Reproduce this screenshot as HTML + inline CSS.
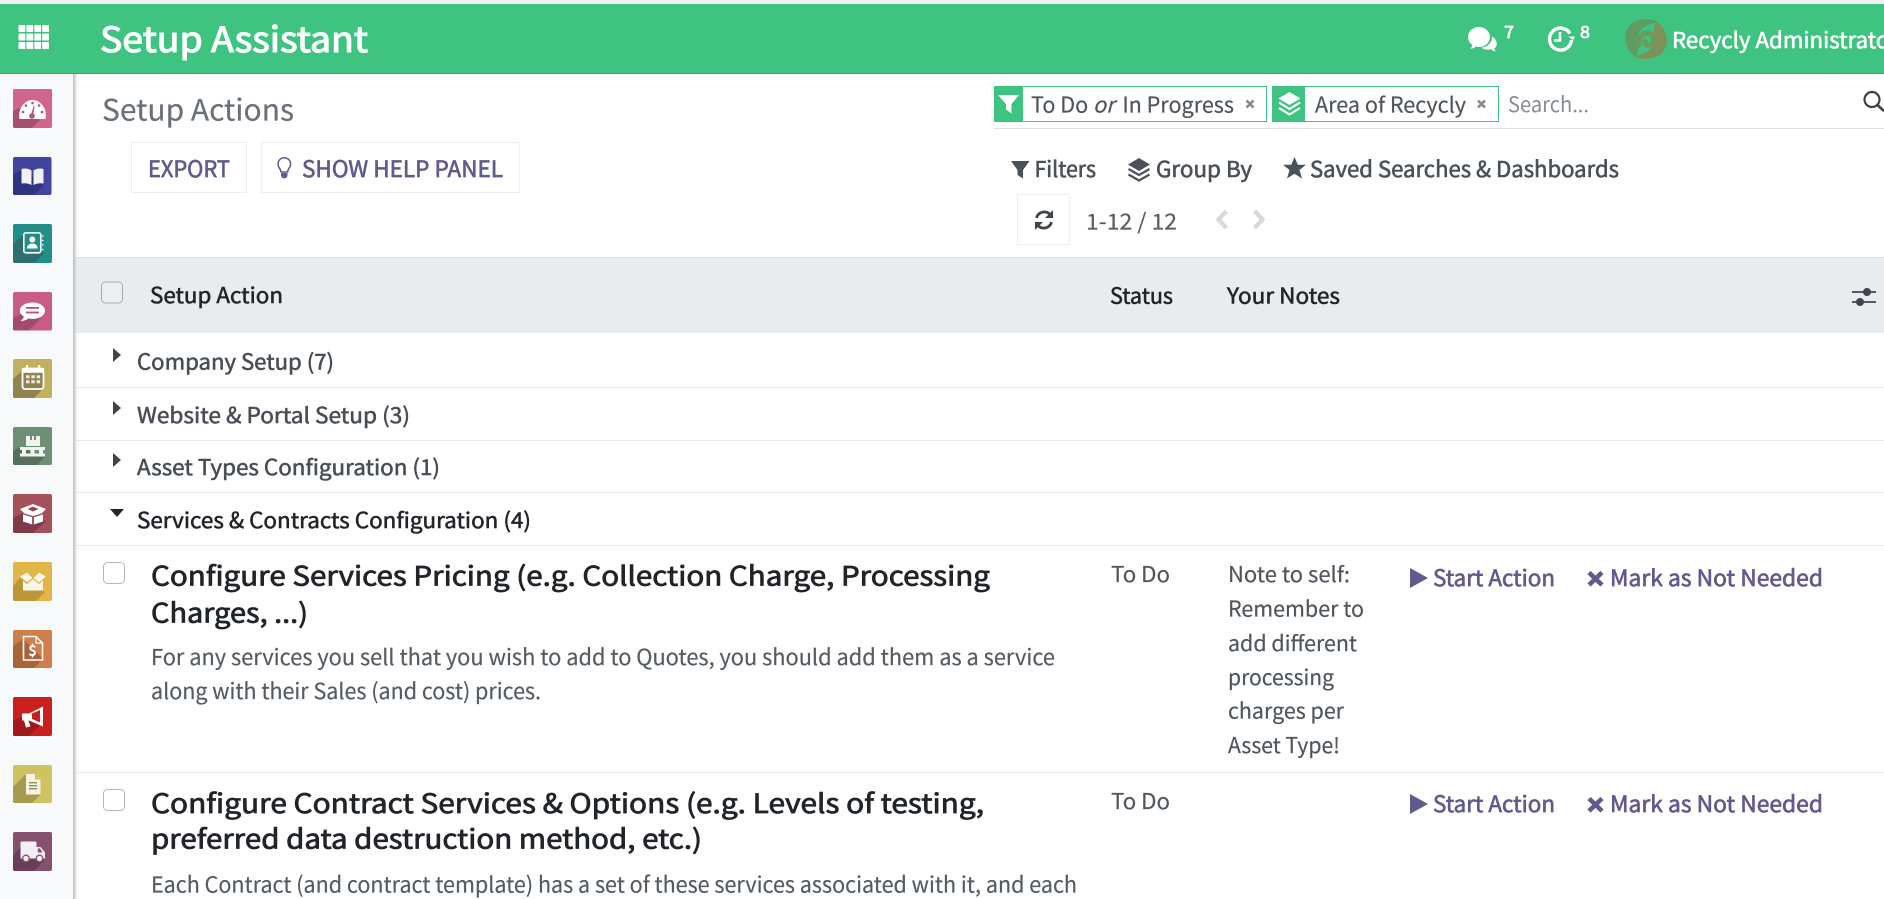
<!DOCTYPE html>
<html lang="en">
<head>
<meta charset="utf-8">
<title>Setup Assistant</title>
<style>
html,body{margin:0;padding:0;width:1884px;height:899px;overflow:hidden;background:#fff}
svg{display:block;filter:blur(.35px)}
text{font-family:"Noto Sans CJK JP","Liberation Sans",sans-serif;white-space:pre}
.w{fill:#fff;stroke:#fff;stroke-width:.5}
.h{fill:#212529;stroke:#212529;stroke-width:.75;font-size:26.5px}
.d{fill:#555c63;stroke:#555c63;stroke-width:.2;font-size:22px}
.g{fill:#484e56;stroke:#484e56;stroke-width:.55;font-size:21.5px}
.b{fill:#212529;stroke:#212529;stroke-width:.55;font-size:21.5px}
.p{fill:#5f5b8f;stroke:#5f5b8f;stroke-width:.65;font-size:22.5px}
.f{fill:#4b5159;stroke:#4b5159;stroke-width:.6;font-size:22px}
.n{fill:#4f565d;stroke:#4f565d;stroke-width:.2;font-size:21.5px}
</style>
</head>
<body>
<svg width="1884" height="899" viewBox="0 0 1884 899" xmlns="http://www.w3.org/2000/svg">
<defs>
<linearGradient id="sh" x1="0" x2="1" y1="0" y2="0"><stop offset="0" stop-color="#b4b7ba"/><stop offset=".5" stop-color="#d6d8da" stop-opacity=".6"/><stop offset="1" stop-color="#fff" stop-opacity="0"/></linearGradient>
</defs>

<!-- backgrounds -->
<rect width="1884" height="4" fill="#f3f0f5"/>
<rect x="0" y="4" width="1884" height="70" fill="#3ec480"/>
<rect x="0" y="73" width="1884" height="1" fill="#35a36c"/>
<rect x="0" y="74" width="73" height="825" fill="#f7f9fb"/>
<rect x="73" y="257" width="1811" height="76" fill="#e9ecef"/>
<rect x="73" y="257" width="1811" height="1" fill="#dcdfe2"/>
<rect x="73" y="74" width="6" height="825" fill="url(#sh)"/>

<!-- navbar -->
<g fill="#fff">
<rect x="18.5" y="25" width="6.8" height="7" rx=".8"/><rect x="26.4" y="25" width="6.8" height="7" rx=".8"/><rect x="34.3" y="25" width="6.8" height="7" rx=".8"/><rect x="42.2" y="25" width="6.8" height="7" rx=".8"/>
<rect x="18.5" y="33.5" width="6.8" height="7" rx=".8"/><rect x="26.4" y="33.5" width="6.8" height="7" rx=".8"/><rect x="34.3" y="33.5" width="6.8" height="7" rx=".8"/><rect x="42.2" y="33.5" width="6.8" height="7" rx=".8"/>
<rect x="18.5" y="42" width="6.8" height="7" rx=".8"/><rect x="26.4" y="42" width="6.8" height="7" rx=".8"/><rect x="34.3" y="42" width="6.8" height="7" rx=".8"/><rect x="42.2" y="42" width="6.8" height="7" rx=".8"/>
</g>
<text x="100" y="52" textLength="268" lengthAdjust="spacingAndGlyphs" class="w" style="font-size:35px;stroke-width:1.100">Setup Assistant</text>

<g fill="#fff">
<path d="M1468 37c0-5.500 4.800-10 11-10 6 0 11 4.500 11 10s-5 10-11 10c-1.200 0-2.300-.1-3.300-.4-1.500 1.200-3.400 2-5.200 2.200 1-1.200 1.700-2.500 1.900-3.900-2.700-1.800-4.400-4.700-4.400-7.900z"/>
<path d="M1492 36.500c2.900 1.700 4.800 4.300 4.800 7.200 0 2-1 3.700-2.400 5 .2 1 .7 1.800 1.500 2.800-2-.3-3.800-1-5-2.200-1 .2-2 .3-3 .3-2.400 0-4.700-.7-6.400-2 6-.5 10.700-5 10.500-11.100z"/>
</g>
<text x="1504" y="38" textLength="10" lengthAdjust="spacingAndGlyphs" class="w" style="font-size:17px;stroke-width:.7">7</text>
<g fill="none" stroke="#fff">
<path d="M1570 33.500a11 11 0 1 0 1.500 6.500" stroke-width="3.400"/>
<path d="M1560 32v8.500h-6" stroke-width="2.600"/>
</g>
<path d="M1573 40l-4.500-3.500h6.500z" fill="#fff"/>
<text x="1580" y="38" textLength="10" lengthAdjust="spacingAndGlyphs" class="w" style="font-size:17px;stroke-width:.7">8</text>

<!-- logo: two interlocking swirl commas -->
<g>
<path d="M1636 57C1622 48 1622 28 1634 22C1642 18 1652 18 1658 22C1650 23 1640 27 1638 36C1637 43 1640 49 1636 57z" fill="#5f9c62"/>
<path d="M1636 57C1622 48 1622 28 1634 22C1642 18 1652 18 1658 22C1650 23 1640 27 1638 36C1637 43 1640 49 1636 57z" fill="#7d9159" transform="rotate(180 1646 39)"/>
<path d="M1639 45C1638 35 1646 31 1651 34C1655 37 1654 43 1650 45C1647 46 1645 44 1645 41" fill="none" stroke="#6b9a5c" stroke-width="5" stroke-linecap="round"/>
</g>
<text x="1672" y="48" textLength="226" lengthAdjust="spacingAndGlyphs" class="w" style="font-size:22px;stroke-width:.6">Recycly Administrator</text>

<!-- sidebar tiles -->
<g transform="translate(13,89)">
<rect width="39" height="39" rx="2" fill="#d0668b"/><path d="M0 22L8 18 27 31 19 39H2a2 2 0 0 1-2-2z" fill="#a94f6e"/>
<path d="M6.500 30C4.500 19 12 11 19.500 11S34.500 19 32.500 30z" fill="#fff"/>
<g fill="#b5536f"><circle cx="10" cy="23" r="1.300"/><circle cx="13" cy="16.500" r="1.300"/><circle cx="19.500" cy="14" r="1.300"/><circle cx="26" cy="16.500" r="1.300"/><circle cx="29" cy="23" r="1.300"/><circle cx="19" cy="27" r="2.800"/><path d="M18 26l2.800-9.500 .8.300-1.500 10z"/></g>
</g>
<g transform="translate(13,157)">
<rect width="38.500" height="38" rx="2" fill="#41459f"/><path d="M0 18L9 12 31 28 21 38H2a2 2 0 0 1-2-2z" fill="#30337f"/>
<path d="M8.500 12Q14 10.500 18.500 13.500V28Q14 25.500 8.500 26.500z" fill="#f1f2f8"/><path d="M30.500 12Q25 10.500 20.500 13.500V28Q25 25.500 30.500 26.500z" fill="#f1f2f8"/>
</g>
<g transform="translate(13,224)">
<rect width="39" height="39" rx="2" fill="#1f8f88"/><path d="M0 20L9 12 31 29 21 39H2a2 2 0 0 1-2-2z" fill="#2e6e6c"/>
<rect x="10.800" y="8.800" width="17" height="20" rx="2" fill="#1f8f88" stroke="#fff" stroke-width="1.600"/>
<circle cx="19.300" cy="15.500" r="3" fill="#fff"/><path d="M14 24.500c0-3.500 2.500-5 5.300-5s5.300 1.500 5.300 5z" fill="#fff"/>
<path d="M29 12h1.500M29 16.500h1.500M29 21h1.500M29 25.500h1.500" stroke="#fff" stroke-width="1.200"/>
</g>
<g transform="translate(13,292)">
<rect width="39" height="38.500" rx="2" fill="#c95c87"/><path d="M0 26L8 22 28 26 16 38.500H2a2 2 0 0 1-2-2z" fill="#a34b6d"/>
<path d="M19.500 10.500c7 0 12.500 3.700 12.500 8.200s-5.500 8.200-12.500 8.200c-1.500 0-2.800-.2-4-.5-2 1.700-5 2.600-8 2.700 1.700-1.300 3-3 3.400-4.600-2.400-1.500-4-3.500-4-5.800 0-4.500 5.600-8.200 12.600-8.200z" fill="#fff"/>
<rect x="13" y="15" width="13" height="1.800" fill="#b5537a"/><rect x="13" y="19.600" width="13" height="1.800" fill="#b5537a"/>
</g>
<g transform="translate(13,359)">
<rect width="39" height="39" rx="2" fill="#c2b05c"/><path d="M0 20L9 12 31 29 21 39H2a2 2 0 0 1-2-2z" fill="#8f8450"/>
<rect x="9.500" y="9.500" width="21" height="20.500" rx="2.500" fill="#8f8450" stroke="#fff" stroke-width="1.800"/>
<rect x="9" y="9" width="22" height="4.800" fill="#fff"/>
<rect x="13" y="6" width="2.200" height="5" fill="#fff"/><rect x="25" y="6" width="2.200" height="5" fill="#fff"/>
<g fill="#fff" opacity=".85"><rect x="13" y="16.300" width="3.500" height="3"/><rect x="18.300" y="16.300" width="3.500" height="3"/><rect x="23.600" y="16.300" width="3.500" height="3"/><rect x="13" y="21.300" width="3.500" height="3"/><rect x="18.300" y="21.300" width="3.500" height="3"/><rect x="23.600" y="21.300" width="3.500" height="3"/></g>
</g>
<g transform="translate(13,427)">
<rect width="39" height="38" rx="2" fill="#6f8e76"/><path d="M0 24L7 20 32 30 24 38H2a2 2 0 0 1-2-2z" fill="#55705d"/>
<path d="M13 9h4v4h2V9h2v4h2V9h4v10H13z" fill="#f1f3f0"/>
<rect x="7" y="20" width="25" height="3" fill="#f1f3f0"/><rect x="7" y="26.500" width="25" height="3" fill="#f1f3f0"/>
<rect x="9" y="23" width="4" height="3.500" fill="#f1f3f0"/><rect x="17.500" y="23" width="4" height="3.500" fill="#f1f3f0"/><rect x="26" y="23" width="4" height="3.500" fill="#f1f3f0"/>
</g>
<g transform="translate(13,494)">
<rect width="39" height="39" rx="2" fill="#a5505b"/><path d="M0 24L8 20 33 27 20 39H2a2 2 0 0 1-2-2z" fill="#7f3a46"/>
<path d="M20 10L33 15 28.500 19.500 20 22 11.500 19.500 7 15z" fill="#fff"/>
<path d="M14.500 15L20 12.800 25.500 15 20 17.500z" fill="#8f4550"/>
<path d="M10 20.500L19.200 23.300V30.500L10 27.500z" fill="#fff"/><path d="M30 20.500L20.800 23.300V30.500L30 27.500z" fill="#fff"/>
</g>
<g transform="translate(13,562)">
<rect width="39" height="39" rx="2" fill="#e3b446"/><path d="M0 24L7 16 32 30 23 39H2a2 2 0 0 1-2-2z" fill="#bd9638"/>
<path d="M7 14.500L14 10.500 19.500 16 14 20.500z" fill="#fbf7ea"/><path d="M33 14.500L26 10.500 20.500 16 26 20.500z" fill="#fbf7ea"/>
<path d="M10 18.500L14 22 19.500 17.500 20 17.500 20.500 17.500 26 22 30 18.500V28.500H10z" fill="#f8f5ea"/>
</g>
<g transform="translate(13,630)">
<rect width="39" height="38" rx="2" fill="#d17d4c"/><path d="M0 16L10 9 30 29 21 38H2a2 2 0 0 1-2-2z" fill="#a8633b"/>
<path d="M10.500 6.500H23L29.500 13V30H10.500z" fill="none" stroke="#fff" stroke-width="1.600"/>
<path d="M23 6.500V13H29.500" fill="none" stroke="#fff" stroke-width="1.300"/>
<text x="19.500" y="26" text-anchor="middle" style="font-size:15px;font-weight:700;fill:#fff">$</text>
</g>
<g transform="translate(13,697)">
<rect width="39" height="39" rx="2" fill="#c8211f"/><path d="M0 24L9 20 30 25 16 39H2a2 2 0 0 1-2-2z" fill="#a01a1b"/>
<path d="M9 16.500H16L30 9.500V29.500L16 23.500H15.500L17.500 29.500 13 30.500 11 23.500H9z" fill="#fff"/>
<path d="M19 16.500L27 13V25.500L19 22z" fill="#c8211f"/>
</g>
<g transform="translate(13,765)">
<rect width="39" height="38" rx="2" fill="#cfc361"/><path d="M0 22L13 9 28 29 19 38H2a2 2 0 0 1-2-2z" fill="#a59a4f"/>
<path d="M13 9H22L27.500 14.500V29.500H13z" fill="#f6f3df"/><path d="M22 9V14.500H27.500z" fill="#cfc361"/>
<g fill="#8e8a5f"><rect x="16" y="17" width="8" height="1.400"/><rect x="16" y="20" width="8" height="1.400"/><rect x="16" y="23" width="8" height="1.400"/></g>
</g>
<g transform="translate(13,832)">
<rect width="39" height="39" rx="2" fill="#86516f"/><path d="M0 24L7 16 32 28 21 39H2a2 2 0 0 1-2-2z" fill="#693f58"/>
<path d="M9 9.500H22A1.500 1.500 0 0 1 23.500 11V15H27.500L32 20.500V26.500H7.500V11A1.500 1.500 0 0 1 9 9.500z" fill="#f3eef1"/>
<path d="M24.800 16.500H27L29.500 20.500H24.800z" fill="#86516f"/>
<circle cx="13" cy="26.500" r="3.300" fill="#f3eef1" stroke="#86516f" stroke-width="1.300"/><circle cx="26.500" cy="26.500" r="3.300" fill="#f3eef1" stroke="#86516f" stroke-width="1.300"/>
</g>

<!-- control panel left -->
<text x="102" y="120.500" textLength="192" lengthAdjust="spacingAndGlyphs" style="font-size:29.500px;fill:#6a7178;stroke:#6a7178;stroke-width:.2">Setup Actions</text>
<rect x="131.500" y="142.500" width="115" height="50" fill="#fff" stroke="#eeeef0"/>
<text x="148" y="177" textLength="82" lengthAdjust="spacingAndGlyphs" class="p">EXPORT</text>
<rect x="261.500" y="142.500" width="258" height="50" fill="#fff" stroke="#eeeef0"/>
<g fill="none" stroke="#5f5b8f" stroke-width="1.500"><path d="M281 172c0-3-3-4.500-3-8a6.300 6.300 0 0 1 12.600 0c0 3.500-3 5-3 8z"/></g>
<path d="M281 173h6.500v3l-1.500 2.300h-3.500L281 176z" fill="#5f5b8f"/>
<text x="302" y="177" textLength="201" lengthAdjust="spacingAndGlyphs" class="p">SHOW HELP PANEL</text>

<!-- search / facets -->
<rect x="994" y="86" width="29" height="36" fill="#3ec480"/>
<rect x="1022.500" y="86.500" width="244" height="35" fill="#fff" stroke="#3ec480"/>
<path d="M998 95H1019L1011.500 104V113.500L1006 109.500V104z" fill="#fff"/>
<text x="1031" y="112.500" textLength="203" lengthAdjust="spacingAndGlyphs" class="n">To Do <tspan font-style="italic">or</tspan><tspan dx="3"> In Progress</tspan></text>
<path d="M1246.500 100.500L1253.500 107.500M1253.500 100.500L1246.500 107.500" stroke="#85898e" stroke-width="2.600"/>
<rect x="1272" y="86" width="33" height="36" fill="#3ec480"/>
<rect x="1304.500" y="86.500" width="194" height="35" fill="#fff" stroke="#3ec480"/>
<path d="M1289.500 92L1300.500 98.500 1289.500 105 1278.500 98.500z" fill="#fff"/>
<path d="M1279 102.500L1289.500 109 1300 102.500M1279 108L1289.500 114.500 1300 108" fill="none" stroke="#fff" stroke-width="2.200"/>
<text x="1315" y="112.500" textLength="151" lengthAdjust="spacingAndGlyphs" class="n">Area of Recycly</text>
<path d="M1478 100.500L1485 107.500M1485 100.500L1478 107.500" stroke="#85898e" stroke-width="2.600"/>
<text x="1508" y="112" textLength="81" lengthAdjust="spacingAndGlyphs" style="font-size:21px;fill:#868c93">Search...</text>
<circle cx="1872" cy="99.500" r="7.500" fill="none" stroke="#3c4247" stroke-width="2.200"/>
<path d="M1877.500 105L1884 111" stroke="#3c4247" stroke-width="2.600"/>
<rect x="994" y="128" width="890" height="1" fill="#dee0e2"/>

<!-- filters row -->
<path d="M1011 161H1029.500L1023 170V178.500L1017.500 175V170z" fill="#4b5159"/>
<text x="1034.500" y="177" textLength="61.500" lengthAdjust="spacingAndGlyphs" class="f">Filters</text>
<path d="M1139 158L1150 164.500 1139 171 1128 164.500z" fill="#4b5159"/>
<path d="M1128.500 169L1139 175 1149.500 169M1128.500 174.500L1139 180.500 1149.500 174.500" fill="none" stroke="#4b5159" stroke-width="2.200"/>
<text x="1156" y="177" textLength="96" lengthAdjust="spacingAndGlyphs" class="f">Group By</text>
<path d="M1294.500 157L1297.800 164.700H1306L1299.500 170 1302 178.500 1294.500 173.700 1287 178.500 1289.500 170 1283 164.700H1291.200z" fill="#4b5159"/>
<text x="1310" y="177" textLength="309" lengthAdjust="spacingAndGlyphs" class="f">Saved Searches &amp; Dashboards</text>

<!-- pager -->
<rect x="1017.500" y="194.500" width="52" height="50" fill="#fff" stroke="#eeeef0"/>
<g fill="none" stroke="#3f454c" stroke-width="2.800"><path d="M1036.500 218a8 8 0 0 1 14-3"/><path d="M1051.500 222a8 8 0 0 1-14 3"/></g>
<path d="M1053 210v8h-8zM1035 230v-8h8z" fill="#3f454c"/>
<text x="1086" y="229.500" textLength="91" lengthAdjust="spacingAndGlyphs" style="font-size:22px;fill:#575e65;stroke:#575e65;stroke-width:.2">1-12 / 12</text>
<path d="M1226.500 211L1218.500 219.500 1226.500 228" fill="none" stroke="#d8d9db" stroke-width="4.400"/>
<path d="M1254.500 211L1262.500 219.500 1254.500 228" fill="none" stroke="#d8d9db" stroke-width="4.400"/>

<!-- table header -->
<rect x="101.500" y="282" width="21" height="21" rx="4" fill="#eceef0" stroke="#a9adb1"/>
<text x="150" y="303" textLength="133" lengthAdjust="spacingAndGlyphs" class="b">Setup Action</text>
<text x="1110" y="303.500" textLength="63" lengthAdjust="spacingAndGlyphs" class="b">Status</text>
<text x="1227" y="303.500" textLength="113" lengthAdjust="spacingAndGlyphs" class="b">Your Notes</text>
<path d="M1852 292h24M1852 302h24" stroke="#3f454c" stroke-width="1.700"/>
<circle cx="1867" cy="292" r="4" fill="#3f454c"/><circle cx="1860" cy="302" r="4" fill="#3f454c"/>

<!-- groups -->
<path d="M113 348L121 355 113 362z" fill="#3f454c"/>
<text x="137" y="369.500" textLength="197" lengthAdjust="spacingAndGlyphs" class="g">Company Setup (7)</text>
<rect x="76" y="387" width="1808" height="1" fill="#e8e8ea"/>
<path d="M113 401L121 408 113 415z" fill="#3f454c"/>
<text x="137" y="423" textLength="273" lengthAdjust="spacingAndGlyphs" class="g">Website &amp; Portal Setup (3)</text>
<rect x="76" y="440" width="1808" height="1" fill="#e8e8ea"/>
<path d="M113 453L121 460 113 467z" fill="#3f454c"/>
<text x="137" y="475" textLength="303" lengthAdjust="spacingAndGlyphs" class="g">Asset Types Configuration (1)</text>
<rect x="76" y="492" width="1808" height="1" fill="#e8e8ea"/>
<path d="M110 509H124L117 517z" fill="#212529"/>
<text x="137" y="528" textLength="394" lengthAdjust="spacingAndGlyphs" class="b">Services &amp; Contracts Configuration (4)</text>
<rect x="76" y="545" width="1808" height="1" fill="#e8e8ea"/>

<!-- record 1 -->
<rect x="103.500" y="562.500" width="21" height="21" rx="4" fill="#fff" stroke="#b4b7ba"/>
<text x="151" y="585.500" textLength="839" lengthAdjust="spacingAndGlyphs" class="h">Configure Services Pricing (e.g. Collection Charge, Processing</text>
<text x="151" y="622.500" textLength="157" lengthAdjust="spacingAndGlyphs" class="h">Charges, ...)</text>
<text x="151" y="665" textLength="904" lengthAdjust="spacingAndGlyphs" class="d">For any services you sell that you wish to add to Quotes, you should add them as a service</text>
<text x="151" y="699" textLength="390" lengthAdjust="spacingAndGlyphs" class="d">along with their Sales (and cost) prices.</text>
<text x="1111" y="582" textLength="59" lengthAdjust="spacingAndGlyphs" class="n">To Do</text>
<text x="1228" y="582" textLength="122" lengthAdjust="spacingAndGlyphs" class="n">Note to self:</text>
<text x="1228" y="616.500" textLength="136" lengthAdjust="spacingAndGlyphs" class="n">Remember to</text>
<text x="1228" y="651" textLength="129" lengthAdjust="spacingAndGlyphs" class="n">add different</text>
<text x="1228" y="685" textLength="106" lengthAdjust="spacingAndGlyphs" class="n">processing</text>
<text x="1228" y="718.500" textLength="116" lengthAdjust="spacingAndGlyphs" class="n">charges per</text>
<text x="1228" y="753" textLength="112" lengthAdjust="spacingAndGlyphs" class="n">Asset Type!</text>
<path d="M1410 568L1428 578 1410 588z" fill="#5f5b8f"/>
<text x="1433" y="586" textLength="122" lengthAdjust="spacingAndGlyphs" class="p">Start Action</text>
<path d="M1589 572.500L1602 585M1602 572.500L1589 585" stroke="#5f5b8f" stroke-width="4.600"/>
<text x="1610" y="586" textLength="213" lengthAdjust="spacingAndGlyphs" class="p">Mark as Not Needed</text>
<rect x="76" y="772" width="1808" height="1" fill="#e8e8ea"/>

<!-- record 2 -->
<rect x="103.500" y="789.500" width="21" height="21" rx="4" fill="#fff" stroke="#b4b7ba"/>
<text x="151" y="813" textLength="833" lengthAdjust="spacingAndGlyphs" class="h">Configure Contract Services &amp; Options (e.g. Levels of testing,</text>
<text x="151" y="848.500" textLength="551" lengthAdjust="spacingAndGlyphs" class="h">preferred data destruction method, etc.)</text>
<text x="151" y="892.500" textLength="926" lengthAdjust="spacingAndGlyphs" class="d">Each Contract (and contract template) has a set of these services associated with it, and each</text>
<text x="1111" y="809" textLength="59" lengthAdjust="spacingAndGlyphs" class="n">To Do</text>
<path d="M1410 794L1428 804 1410 814z" fill="#5f5b8f"/>
<text x="1433" y="812" textLength="122" lengthAdjust="spacingAndGlyphs" class="p">Start Action</text>
<path d="M1589 798.500L1602 811M1602 798.500L1589 811" stroke="#5f5b8f" stroke-width="4.600"/>
<text x="1610" y="812" textLength="213" lengthAdjust="spacingAndGlyphs" class="p">Mark as Not Needed</text>
</svg>
</body>
</html>
